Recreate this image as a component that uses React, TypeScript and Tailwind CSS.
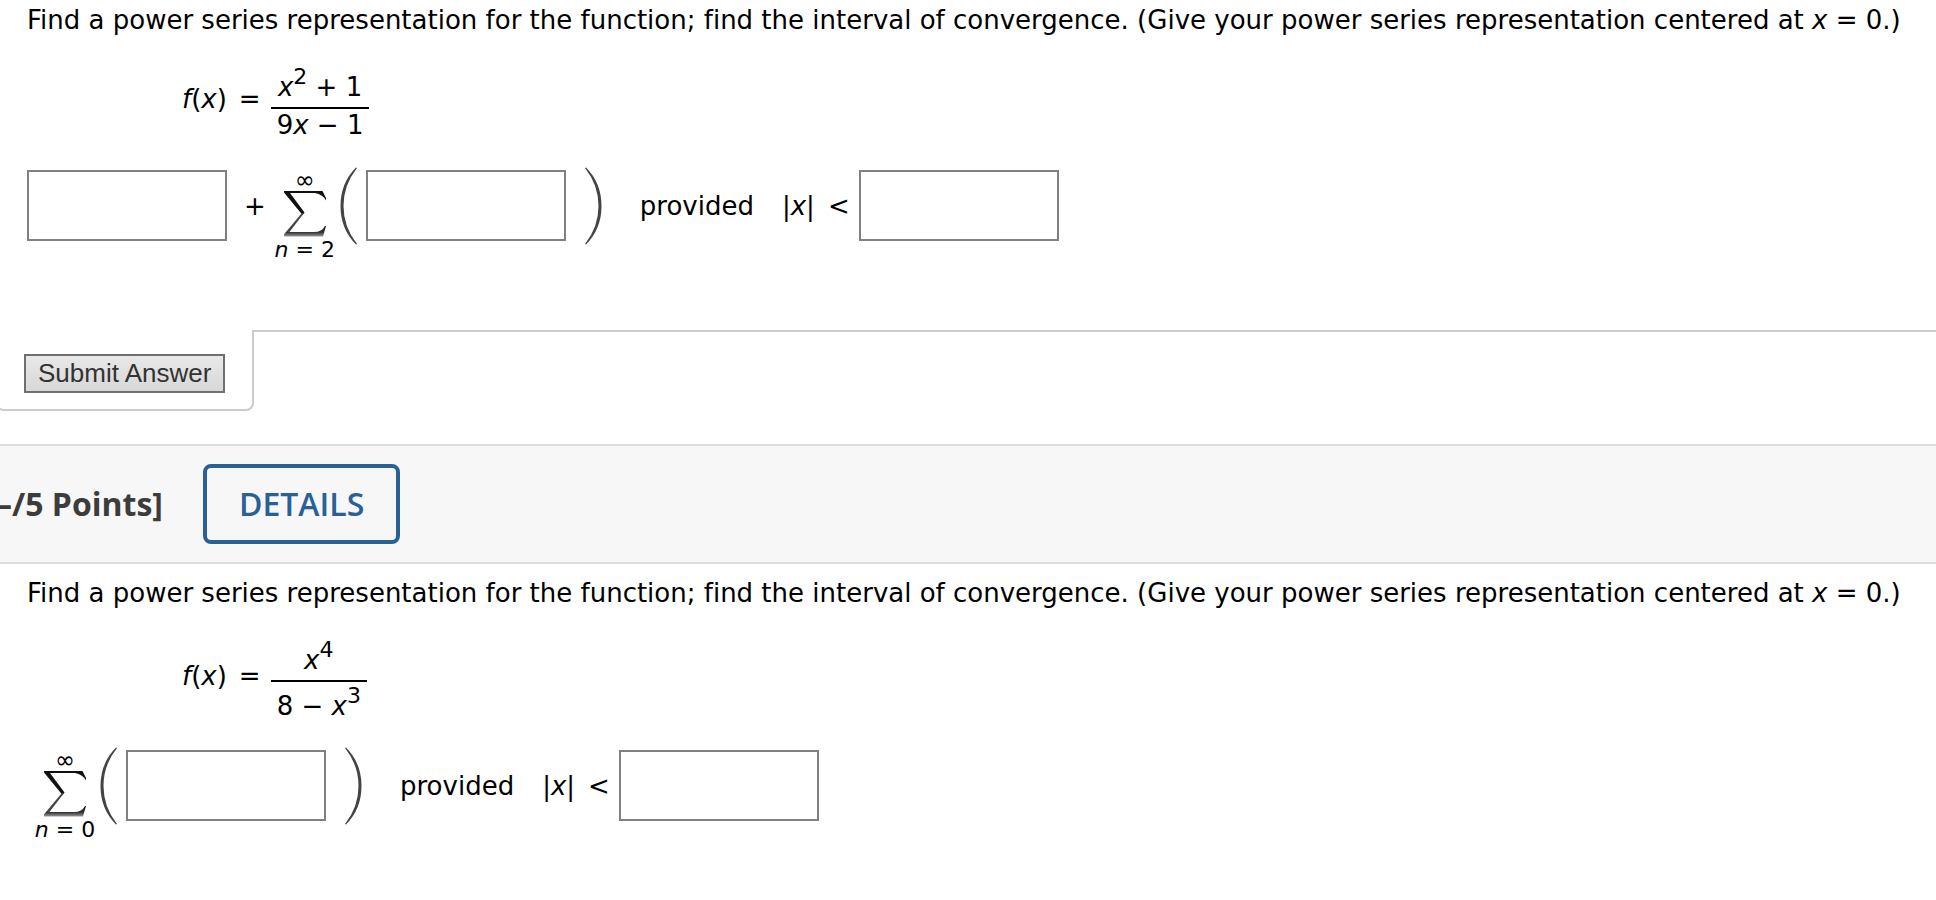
import type { ReactNode } from "react";

const Var = ({ children }: { children: ReactNode }) => <i className="italic">{children}</i>;

const Sup = ({ children }: { children: ReactNode }) => (
  <sup className="static align-[12px] text-[22px] leading-0">{children}</sup>
);

function Sigma() {
  return (
    <svg width="42" height="46" viewBox="0 0 42 46" aria-hidden="true">
      <defs>
        <linearGradient id="sigma-foot" x1="0" y1="0" x2="0" y2="1">
          <stop offset="0" stopColor="#111" />
          <stop offset="0.6" stopColor="#333" />
          <stop offset="1" stopColor="#999" />
        </linearGradient>
      </defs>
      <path d="M0 0H38.500L42 7V9.500Q39 3.500 31 2H6L20.500 21.500L18.500 24L0 1.500Z" fill="#111" />
      <path d="M17.500 22.500L20.500 21.500L5 41.500H1.500Z" fill="#444" />
      <path d="M2 41H30Q38 41 41 35H42L39 45.500H0V43.500Z" fill="url(#sigma-foot)" />
    </svg>
  );
}

function Paren({ side }: { side: "left" | "right" }) {
  return (
    <svg width="18" height="78" viewBox="0 0 18 78" aria-hidden="true" className="shrink-0">
      <path
        d={
          side === "left"
            ? "M16 0.500Q0.500 16 0.500 39Q0.500 62 16 77.500L17 77Q3.500 60 3.500 39Q3.500 18 17 1Z"
            : "M2 0.500Q17.500 16 17.500 39Q17.500 62 2 77.500L1 77Q14.500 60 14.500 39Q14.500 18 1 1Z"
        }
        fill="#444"
      />
    </svg>
  );
}

function Blank({ label }: { label: string }) {
  return (
    <input
      type="text"
      aria-label={label}
      className="h-[71px] w-[200px] shrink-0 border-2 border-[#808080] bg-white px-2 outline-none"
    />
  );
}

function Prompt() {
  return (
    <p className="leading-[40px] whitespace-nowrap">
      Find a power series representation for the function; find the interval of convergence. (Give your power
      series representation centered at <Var>x</Var> = 0.)
    </p>
  );
}

function Equation({ top, bottom, tall }: { top: ReactNode; bottom: ReactNode; tall?: boolean }) {
  return (
    <div className="flex items-center gap-[10px] pl-[155px]">
      <span className="flex gap-3 pb-3 leading-8">
        <span>
          <Var>f</Var>(<Var>x</Var>)
        </span>
        <span>=</span>
      </span>
      <div className="text-center">
        <div className="px-[6px] pb-[2px] leading-9">{top}</div>
        <div className={tall ? "border-t-2 border-black px-[6px] pt-2 leading-8" : "border-t-2 border-black px-[6px] leading-8"}>
          {bottom}
        </div>
      </div>
    </div>
  );
}

function Series({ from, lead }: { from: number; lead?: boolean }) {
  return (
    <div className={lead ? "flex items-center" : "flex items-center pl-2"}>
      {lead && (
        <>
          <Blank label="Leading terms" />
          <span className="pr-[9px] pl-[17px]">+</span>
        </>
      )}
      <div className="flex w-[60px] flex-col items-center pt-[21px] text-[22px]">
        <span className="h-[22px] text-[24px] leading-[22px]">∞</span>
        <Sigma />
        <span className="leading-[26px] whitespace-nowrap">
          <Var>n</Var> = {from}
        </span>
      </div>
      <div className="ml-[5px] flex items-center gap-2">
        <Paren side="left" />
        <Blank label="General term" />
      </div>
      <div className="ml-[18px] flex items-center">
        <Paren side="right" />
        <span className="ml-[38px]">provided</span>
        <span className="ml-7">
          |<Var>x</Var>|
        </span>
        <span className="mr-[9px] ml-[13px]">&lt;</span>
        <Blank label="Radius of convergence" />
      </div>
    </div>
  );
}

export default function App() {
  return (
    <main className="min-h-screen overflow-hidden bg-white font-['DejaVu_Sans',Verdana,sans-serif] text-[26px] leading-8 text-black [font-variant-ligatures:none]">
      <section>
        <div className="pl-[27px]">
          <Prompt />
          <div className="pt-[29px]">
            <Equation
              top={<><Var>x</Var><Sup>2</Sup> + 1</>}
              bottom={<>9<Var>x</Var> − 1</>}
            />
          </div>
          <div className="pt-[7px]">
            <Series from={2} lead />
          </div>
        </div>
        <div className="mt-[67px] flex">
          <div className="-ml-1 rounded-b-lg border-r-2 border-b-2 border-l-2 border-[#ccc] pt-6 pr-[27px] pb-4 pl-[26px]">
            <button
              type="button"
              className="block border-2 border-[#6f6f6f] bg-linear-to-b from-[#e8e8e8] to-[#d8d8d8] px-3 pt-px pb-[2px] font-['Liberation_Sans',Arial,sans-serif] text-[26px] leading-8 text-[#333]"
            >
              Submit Answer
            </button>
          </div>
          <div className="flex-1 border-t-2 border-[#ccc]" />
        </div>
      </section>

      <header className="mt-[33px] flex h-[120px] items-center gap-10 border-y-2 border-[#ddd] bg-[#f7f7f7] font-['Open_Sans',sans-serif] text-[32px]">
        <h2 className="-ml-1 font-bold text-[#3c3c3c]">–/5 Points]</h2>
        <button
          type="button"
          className="h-20 rounded-lg border-4 border-[#296096] px-8 font-semibold text-[#296096]"
        >
          DETAILS
        </button>
      </header>

      <section className="pt-[9px] pl-[27px]">
        <Prompt />
        <div className="pt-[29px]">
          <Equation
            tall
            top={<><Var>x</Var><Sup>4</Sup></>}
            bottom={<>8 − <Var>x</Var><Sup>3</Sup></>}
          />
        </div>
        <div className="pt-[6px]">
          <Series from={0} />
        </div>
      </section>
    </main>
  );
}
